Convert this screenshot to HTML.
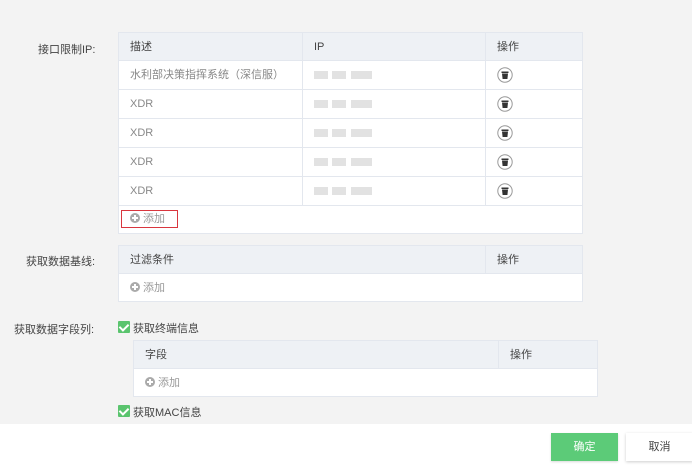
<!DOCTYPE html>
<html><head><meta charset="utf-8"><style>
*{box-sizing:border-box;margin:0;padding:0}
body{width:692px;height:467px;overflow:hidden;background:#fff;font-family:"Liberation Sans","Noto Sans CJK SC",sans-serif;font-size:11px;color:#555;position:relative}
.top{position:absolute;left:0;top:0;width:692px;height:424px;background:#f3f3f3}
.a{position:absolute}
.lbl{position:absolute;font-size:11px;color:#444}
table{position:absolute;border-collapse:collapse;background:#fff;table-layout:fixed}
td,th{border:1px solid #e3e7ee;height:29px;padding-left:11px;text-align:left;font-weight:normal;font-size:11px;vertical-align:middle;line-height:14px}
th{background:#eef1f5;color:#444;height:28px}
td{color:#888}
.ip{display:inline-block;height:8px;width:58px;background:linear-gradient(90deg,#e2e2e2 0 14px,transparent 14px 18px,#e2e2e2 18px 32px,transparent 32px 37px,#e2e2e2 37px 58px);vertical-align:middle}
svg{vertical-align:middle}
.add{color:#999}
.plus{display:inline-block;width:10px;height:10px;border-radius:50%;background:#aaa;position:relative;vertical-align:-1px;margin-right:3px}
.plus:before{content:"";position:absolute;left:2px;top:4px;width:6px;height:2px;background:#fff}
.plus:after{content:"";position:absolute;left:4px;top:2px;width:2px;height:6px;background:#fff}
.cb{position:absolute;width:12px;height:12px;background:#5ac46e;border-radius:1px}
.cb:after{content:"";position:absolute;left:3px;top:1px;width:4px;height:7px;border:solid #fff;border-width:0 2px 2px 0;transform:rotate(45deg)}
.btn{position:absolute;top:433px;height:28px;width:67px;text-align:center;line-height:28px;font-size:11px}
</style></head><body>
<div class="top"></div>
<div class="lbl" style="left:38px;top:41px">接口限制IP:</div>
<table style="left:118px;top:32px;width:464px">
<colgroup><col style="width:184px"><col style="width:183px"><col style="width:97px"></colgroup>
<tr><th>描述</th><th>IP</th><th>操作</th></tr>
<tr><td>水利部决策指挥系统（深信服）</td><td><span class="ip"></span></td><td><svg width="16" height="16" viewBox="0 0 16 16"><circle cx="8" cy="8" r="7.2" fill="#fff" stroke="#999"/><rect x="4.5" y="4.5" width="7" height="1.5" fill="#333"/><path d="M5 6.5h6l-.6 5.5h-4.8z" fill="#333"/></svg></td></tr>
<tr><td>XDR</td><td><span class="ip"></span></td><td><svg width="16" height="16" viewBox="0 0 16 16"><circle cx="8" cy="8" r="7.2" fill="#fff" stroke="#999"/><rect x="4.5" y="4.5" width="7" height="1.5" fill="#333"/><path d="M5 6.5h6l-.6 5.5h-4.8z" fill="#333"/></svg></td></tr>
<tr><td>XDR</td><td><span class="ip"></span></td><td><svg width="16" height="16" viewBox="0 0 16 16"><circle cx="8" cy="8" r="7.2" fill="#fff" stroke="#999"/><rect x="4.5" y="4.5" width="7" height="1.5" fill="#333"/><path d="M5 6.5h6l-.6 5.5h-4.8z" fill="#333"/></svg></td></tr>
<tr><td>XDR</td><td><span class="ip"></span></td><td><svg width="16" height="16" viewBox="0 0 16 16"><circle cx="8" cy="8" r="7.2" fill="#fff" stroke="#999"/><rect x="4.5" y="4.5" width="7" height="1.5" fill="#333"/><path d="M5 6.5h6l-.6 5.5h-4.8z" fill="#333"/></svg></td></tr>
<tr><td>XDR</td><td><span class="ip"></span></td><td><svg width="16" height="16" viewBox="0 0 16 16"><circle cx="8" cy="8" r="7.2" fill="#fff" stroke="#999"/><rect x="4.5" y="4.5" width="7" height="1.5" fill="#333"/><path d="M5 6.5h6l-.6 5.5h-4.8z" fill="#333"/></svg></td></tr>
<tr><td colspan="3" style="height:28px"></td></tr>
</table>
<div class="a add" style="left:121px;top:210px;width:57px;height:18px;border:1px solid #d9363e;padding-left:8px;line-height:16px"><span class="plus"></span>添加</div>
<div class="lbl" style="left:26px;top:253px">获取数据基线:</div>
<table style="left:118px;top:245px;width:464px">
<colgroup><col style="width:367px"><col style="width:97px"></colgroup>
<tr><th>过滤条件</th><th>操作</th></tr>
<tr><td colspan="2" class="add" style="height:28px"><span class="plus"></span>添加</td></tr>
</table>
<div class="lbl" style="left:14px;top:321px">获取数据字段列:</div>
<div class="cb" style="left:118px;top:321px"></div>
<div class="lbl" style="left:133px;top:320px;color:#444">获取终端信息</div>
<table style="left:133px;top:340px;width:464px">
<colgroup><col style="width:365px"><col style="width:99px"></colgroup>
<tr><th>字段</th><th>操作</th></tr>
<tr><td colspan="2" class="add" style="height:28px"><span class="plus"></span>添加</td></tr>
</table>
<div class="cb" style="left:118px;top:405px"></div>
<div class="lbl" style="left:133px;top:404px;color:#444">获取MAC信息</div>
<div class="btn" style="left:551px;background:#5ccb78;color:#fff;box-shadow:0 1px 2px rgba(0,0,0,.15)">确定</div>
<div class="btn" style="left:626px;background:#fff;color:#444;box-shadow:0 1px 3px rgba(0,0,0,.2)">取消</div>
</body></html>
